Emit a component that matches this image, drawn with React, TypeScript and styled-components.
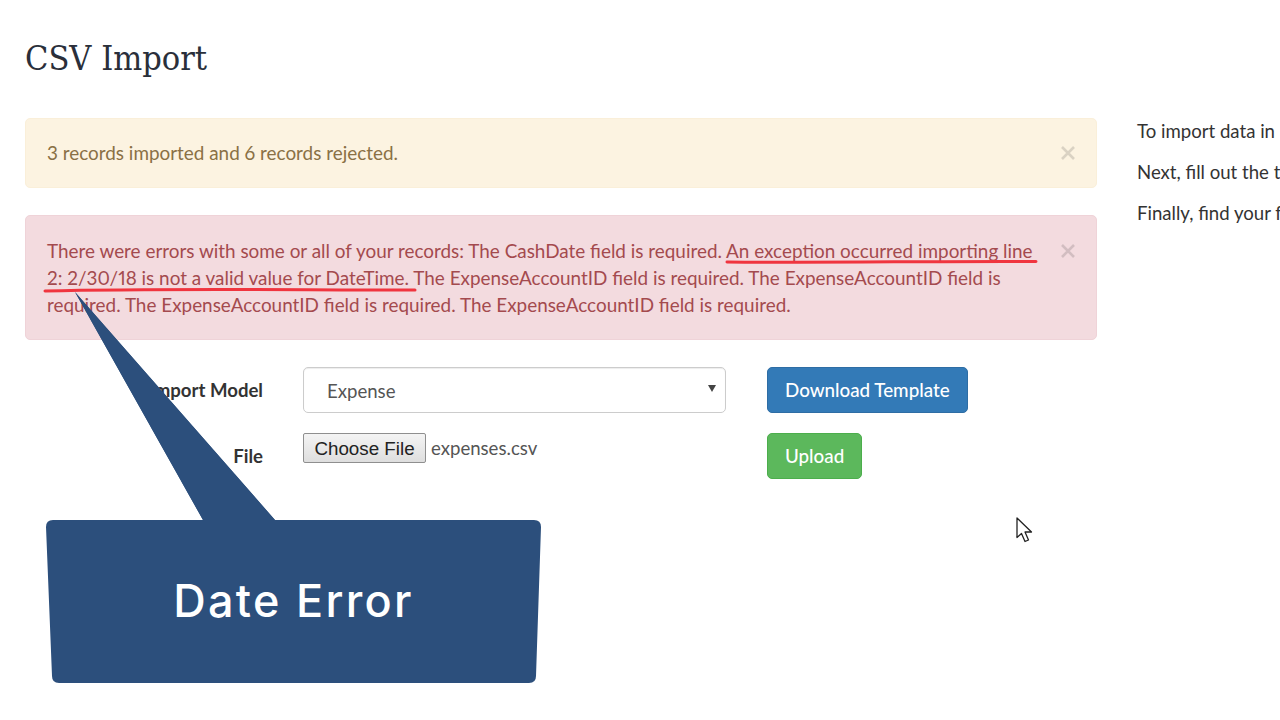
import React from 'react';
import styled, { createGlobalStyle } from 'styled-components';

const GlobalStyle = createGlobalStyle`
  html, body {
    margin: 0;
    padding: 0;
    width: 1280px;
    height: 720px;
    overflow: hidden;
    background: #fff;
  }
`;

const Page = styled.div`
  position: relative;
  width: 1280px;
  height: 720px;
  overflow: hidden;
  box-sizing: border-box;
  padding: 36px 0 0 25px;
  color: #333;
  font-family: Lato, "Open Sans", sans-serif;
  font-size: 18.6px;
  line-height: 26.6px;
`;

const Title = styled.h1`
  margin: 0 0 37px;
  height: 45px;
  font-family: "DejaVu Serif Condensed", "DejaVu Serif", serif;
  font-weight: 400;
  font-size: 34px;
  line-height: 45px;
  color: #2a2f3a;
`;

const Columns = styled.div`
  display: grid;
  grid-template-columns: 1072px 200px;
  column-gap: 40px;
`;

const Alert = styled.div<{ $kind: 'warning' | 'danger' }>`
  display: flex;
  justify-content: space-between;
  box-sizing: border-box;
  padding: ${p => (p.$kind === 'warning' ? '20px 20px 21px 21px' : '21px 20px 21px 21px')};
  margin-bottom: 27px;
  border-radius: 5px;
  border: 1px solid ${p => (p.$kind === 'warning' ? '#faefd9' : '#efd3d8')};
  background: ${p => (p.$kind === 'warning' ? '#fcf3e1' : '#f3dbdf')};
  color: ${p => (p.$kind === 'warning' ? '#8a7045' : '#a44a4e')};
  font-size: 18.9px;
  line-height: 27px;
  font-variant-numeric: proportional-nums;
`;

const AlertText = styled.div`
  width: 990px;
`;

const Close = styled.svg`
  flex: none;
  margin-top: 6px;
  width: 16px;
  height: 16px;
  stroke: #000;
  stroke-width: 2.6;
  opacity: 0.13;
`;

const FormRow = styled.div`
  display: grid;
  grid-template-columns: 238px 423px auto;
  column-gap: 40px;
  margin-bottom: 20px;
  align-items: start;
`;

const Label = styled.label`
  text-align: right;
  font-weight: 700;
  line-height: 46px;
  color: #333;
`;

const Select = styled.div`
  display: flex;
  align-items: center;
  justify-content: space-between;
  box-sizing: border-box;
  height: 46px;
  padding: 3px 9px 0 23px;
  border: 1px solid #ccc;
  border-radius: 5px;
  color: #555;
  background: #fff;
  box-shadow: inset 0 1px 1px rgba(0, 0, 0, 0.075);
`;

const Arrow = styled.span`
  width: 0;
  height: 0;
  margin-bottom: 6px;
  border-left: 4px solid transparent;
  border-right: 4px solid transparent;
  border-top: 7px solid #444;
`;

const FileField = styled.div`
  display: flex;
  align-items: center;
  gap: 5px;
  color: #555;
`;

const FileName = styled.span`
  padding-top: 1px;
`;

const ChooseButton = styled.button`
  box-sizing: border-box;
  width: 123px;
  height: 30px;
  padding: 2px 0 0;
  border: 1px solid #8f8f8f;
  border-radius: 2px;
  background: linear-gradient(#f4f4f4, #dedede);
  color: #222;
  font-family: "Liberation Sans", Arial, sans-serif;
  font-size: 18.800px;
`;

const Button = styled.button<{ $variant: 'primary' | 'success' }>`
  justify-self: start;
  box-sizing: border-box;
  height: 46px;
  margin-left: 1px;
  padding: 0 17px 2px;
  border: 1px solid ${p => (p.$variant === 'primary' ? '#2e6da4' : '#4cae4c')};
  border-radius: 5px;
  background: ${p => (p.$variant === 'primary' ? '#337ab7' : '#5cb85c')};
  color: #fff;
  font-family: Lato, sans-serif;
  font-size: 18.800px;
  font-weight: 500;
`;

const Side = styled.aside`
  white-space: nowrap;
`;

const SideLine = styled.p`
  margin: 0 0 14.400px;
`;

const Marks = styled.svg`
  position: absolute;
  left: 0;
  top: 0;
  pointer-events: none;
`;

const Callout = styled.div`
  position: absolute;
  left: 46px;
  top: 292px;
  width: 495px;
  height: 391px;
`;

const CalloutShape = styled.svg`
  display: block;
  fill: #2c4f7c;
`;

const CalloutLabel = styled.div`
  position: absolute;
  left: 0;
  right: 0;
  top: 228px;
  height: 163px;
  display: flex;
  align-items: center;
  justify-content: center;
  color: #fff;
  font-family: Inter, Lato, sans-serif;
  font-size: 45px;
  font-weight: 500;
  letter-spacing: 2.300px;
`;

const Cursor = styled.svg`
  position: absolute;
  left: 1015px;
  top: 516px;
`;

const X = () => (
  <Close viewBox="0 0 16 16">
    <path d="M2 2 L14 14 M14 2 L2 14" />
  </Close>
);

export default function App() {
  return (
    <Page>
      <GlobalStyle />
      <Title>CSV Import</Title>
      <Columns>
        <div>
          <Alert $kind="warning">
            <AlertText>3 records imported and 6 records rejected.</AlertText>
            <X />
          </Alert>
          <Alert $kind="danger">
            <AlertText>
              There were errors with some or all of your records: The CashDate field is required. An exception occurred importing line 2: 2/30/18 is not a valid value for DateTime. The ExpenseAccountID field is required. The ExpenseAccountID field is required. The ExpenseAccountID field is required. The ExpenseAccountID field is required.
            </AlertText>
            <X />
          </Alert>
          <FormRow>
            <Label>Import Model</Label>
            <Select>
              Expense
              <Arrow />
            </Select>
            <Button $variant="primary">Download Template</Button>
          </FormRow>
          <FormRow>
            <Label>File</Label>
            <FileField>
              <ChooseButton>Choose File</ChooseButton>
              <FileName>expenses.csv</FileName>
            </FileField>
            <Button $variant="success">Upload</Button>
          </FormRow>
        </div>
        <Side>
          <SideLine>To import data in</SideLine>
          <SideLine>Next, fill out the t</SideLine>
          <SideLine>Finally, find your f</SideLine>
        </Side>
      </Columns>

      <Marks width="1280" height="720" fill="none" stroke="#f0353f" strokeWidth="3" strokeLinecap="round">
        <path d="M727 262 C830 263 930 261 1036 261.500" />
        <path d="M45 291 C170 288 290 290 415 290" />
      </Marks>

      <Callout>
        <CalloutShape width="495" height="391" viewBox="0 0 495 391">
          <path d="M29 0 L157 228 L488 228 Q495 228 495 235 L490 384 Q490 391 483 391 L13 391 Q6 391 6 384 L0 235 Q0 228 7 228 L229 228 Z" />
          <path d="M29 0 L157 228 L229 228 Z" />
        </CalloutShape>
        <CalloutLabel>Date Error</CalloutLabel>
      </Callout>

      <Cursor width="19" height="28" viewBox="0 0 19 28">
        <path d="M2 2 L2 21.500 L6.500 17.500 L10 25.500 L13.500 24 L10 16 L16.500 16 Z" fill="#fff" stroke="#222" strokeWidth="1.300" strokeLinejoin="round" />
      </Cursor>
    </Page>
  );
}
